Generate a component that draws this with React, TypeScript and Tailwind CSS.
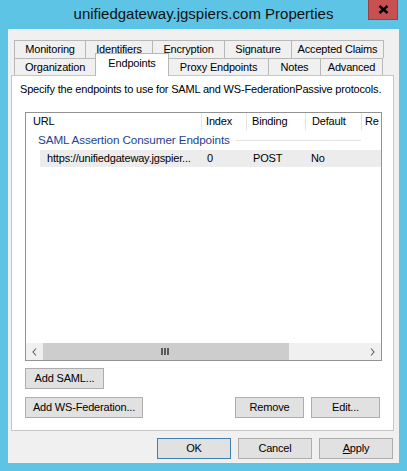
import React from "react";

const F = "font-['Liberation_Sans',Arial,sans-serif]";

function TopTab({ cls, label }: { cls: string; label: string }) {
  return (
    <div
      className={`${cls} h-[18px] border border-b-0 border-[#b8b8b8] bg-[#f0f0f0] flex items-center justify-center text-[11px] tracking-[-0.18px] text-black whitespace-nowrap`}
    >
      {label}
    </div>
  );
}

function Btn({ cls, children, def }: { cls: string; children: React.ReactNode; def?: boolean }) {
  return (
    <div
      className={`${cls} h-[21px] border ${def ? "border-[#3c7fb1]" : "border-[#adadad]"} bg-[#e1e1e1] flex items-center justify-center text-[11px] tracking-[-0.18px] text-black whitespace-nowrap`}
    >
      {children}
    </div>
  );
}

function Chevron({ dir }: { dir: "l" | "r" }) {
  return (
    <svg width="5" height="8" viewBox="0 0 5 8">
      {dir === "l" ? (
        <polyline points="4,0.5 1,4 4,7.5" fill="none" stroke="#606060" strokeWidth="1.1" />
      ) : (
        <polyline points="1,0.5 4,4 1,7.5" fill="none" stroke="#606060" strokeWidth="1.1" />
      )}
    </svg>
  );
}

export default function App() {
  return (
    <div className={`w-[407px] h-[471px] bg-[#5ec4e6] px-[8px] flex flex-col ${F}`}>
      {/* Title bar */}
      <div className="flex h-[29px] pl-[31px] pr-[1px]">
        <div className="flex-1 flex items-center justify-center text-[15px] text-[#111111] whitespace-nowrap">
          unifiedgateway.jgspiers.com Properties
        </div>
        <div className="w-[30px] h-[20px] bg-[#c75050] border border-[#9e3f3f] border-t-0 flex items-center justify-center">
          <svg width="11" height="9" viewBox="0 0 11 9">
            <line x1="1.5" y1="1" x2="9.5" y2="8" stroke="#000000" strokeWidth="2.4" />
            <line x1="9.5" y1="1" x2="1.5" y2="8" stroke="#000000" strokeWidth="2.4" />
          </svg>
        </div>
      </div>

      {/* Client area */}
      <div className="h-[434px] bg-[#f0f0f0] flex flex-col pt-[11px]">
        {/* Tabs */}
        <div className="flex flex-col pl-[6px]">
          <div className="flex">
            <TopTab cls="w-[72px]" label="Monitoring" />
            <TopTab cls="w-[68px] -ml-px" label="Identifiers" />
            <TopTab cls="w-[73px] -ml-px" label="Encryption" />
            <TopTab cls="w-[68px] -ml-px" label="Signature" />
            <TopTab cls="w-[93px] -ml-px" label="Accepted Claims" />
          </div>
          <div className="flex items-end h-[17px]">
            <div className="w-[82px] h-[17px] border border-b-0 border-[#b8b8b8] bg-[#f0f0f0] flex items-center justify-center text-[11px] tracking-[-0.18px] text-black">
              Organization
            </div>
            <div className="relative z-10 w-[74px] h-[23px] -mb-px -ml-px border border-b-0 border-[#b8b8b8] bg-white flex items-center justify-center pb-[3px] text-[11px] tracking-[-0.18px] text-black">
              Endpoints
            </div>
            <div className="w-[101px] h-[17px] -ml-px border border-b-0 border-[#b8b8b8] bg-[#f0f0f0] flex items-center justify-center text-[11px] tracking-[-0.18px] text-black whitespace-nowrap">
              Proxy Endpoints
            </div>
            <div className="w-[53px] h-[17px] -ml-px border border-b-0 border-[#b8b8b8] bg-[#f0f0f0] flex items-center justify-center text-[11px] tracking-[-0.18px] text-black">
              Notes
            </div>
            <div className="w-[63px] h-[17px] -ml-px border border-b-0 border-[#b8b8b8] bg-[#f0f0f0] flex items-center justify-center text-[11px] tracking-[-0.18px] text-black">
              Advanced
            </div>
          </div>
        </div>

        {/* Tab panel */}
        <div className="ml-[3px] w-[383px] h-[356px] border border-[#c6c6c6] bg-white flex flex-col pt-[7px] px-[13px] pb-[12px]">
          <div className="h-[13px] leading-[13px] -ml-[5px] text-[11px] tracking-[-0.18px] text-black whitespace-nowrap">
            Specify the endpoints to use for SAML and WS-FederationPassive protocols.
          </div>

          {/* List view */}
          <div className="mt-[16px] w-[357px] h-[249px] border border-[#939393] bg-white flex flex-col overflow-hidden">
            {/* header */}
            <div className="flex h-[17px] text-[11px] tracking-[-0.18px] text-black">
              <div className="w-[176px] shrink-0 border-r border-[#e5e5e5] pl-[7px] flex items-center">URL</div>
              <div className="w-[45px] shrink-0 border-r border-[#e5e5e5] pl-[4px] flex items-center">Index</div>
              <div className="w-[59px] shrink-0 border-r border-[#e5e5e5] pl-[5px] flex items-center">Binding</div>
              <div className="w-[56px] shrink-0 border-r border-[#e5e5e5] pl-[6px] flex items-center">Default</div>
              <div className="flex-1 pl-[3px] flex items-center overflow-hidden whitespace-nowrap">Re</div>
            </div>
            {/* group header */}
            <div className="flex items-center h-[20px] pl-[12px] pr-[20px] gap-[6px]">
              <span className="text-[11.7px] tracking-[-0.1px] text-[#1f3f93] whitespace-nowrap">
                SAML Assertion Consumer Endpoints
              </span>
              <div className="flex-1 h-px bg-[#e2e2e2] mt-[1px]" />
            </div>
            {/* row */}
            <div className="flex h-[17px] ml-[14px] bg-[#ececec] text-[11px] tracking-[-0.18px] text-black">
              <div className="w-[162px] shrink-0 pl-[7px] flex items-center whitespace-nowrap overflow-hidden">
                https://unifiedgateway.jgspier...
              </div>
              <div className="w-[45px] shrink-0 pl-[5px] flex items-center">0</div>
              <div className="w-[59px] shrink-0 pl-[6px] flex items-center">POST</div>
              <div className="w-[56px] shrink-0 pl-[5px] flex items-center">No</div>
              <div className="flex-1" />
            </div>
            <div className="flex-1" />
            {/* horizontal scrollbar */}
            <div className="flex h-[17px] bg-[#f0f0f0]">
              <div className="w-[17px] shrink-0 flex items-center justify-center">
                <Chevron dir="l" />
              </div>
              <div className="w-[246px] shrink-0 bg-[#cdcdcd] flex items-center justify-center">
                <div className="flex gap-[1px] -ml-[2px]">
                  <div className="w-[2px] h-[7px] bg-[#5a5a5a]" />
                  <div className="w-[2px] h-[7px] bg-[#5a5a5a]" />
                  <div className="w-[2px] h-[7px] bg-[#5a5a5a]" />
                </div>
              </div>
              <div className="flex-1" />
              <div className="w-[17px] shrink-0 flex items-center justify-center">
                <Chevron dir="r" />
              </div>
            </div>
          </div>

          <div className="mt-[7px] flex">
            <Btn cls="w-[79px]">Add SAML...</Btn>
          </div>
          <div className="mt-[8px] flex">
            <Btn cls="w-[118px]">Add WS-Federation...</Btn>
            <div className="flex-1" />
            <Btn cls="w-[69px]">Remove</Btn>
            <Btn cls="w-[69px] ml-[7px]">Edit...</Btn>
          </div>
        </div>

        {/* Dialog buttons */}
        <div className="mt-[7px] flex justify-end gap-[7px] pr-[6px]">
          <Btn cls="w-[74px]" def>
            OK
          </Btn>
          <Btn cls="w-[74px]">Cancel</Btn>
          <Btn cls="w-[74px]">
            <span className="underline">A</span>pply
          </Btn>
        </div>
      </div>
    </div>
  );
}
